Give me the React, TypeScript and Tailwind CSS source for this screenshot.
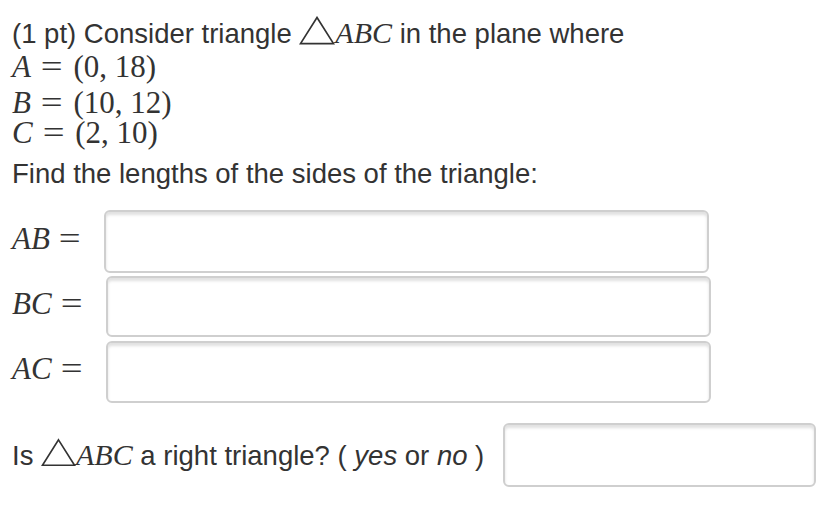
import React from 'react';

const sans = { fontFamily: '"Liberation Sans", Arial, sans-serif' };
const serif = { fontFamily: '"Liberation Serif", "Times New Roman", serif' };

// MathJax-style open triangle symbol
const Tri = ({ w = 36, h = 29 }: { w?: number; h?: number }) => (
  <svg width={w} height={h} viewBox="0 0 36 29" className="inline-block align-[-2px]" aria-label="triangle">
    <path d="M18 1.5 L34.5 27.6 L1.5 27.6 Z" fill="none" stroke="#333" strokeWidth="1.7" strokeLinejoin="miter" />
  </svg>
);

const Box = ({ className }: { className: string }) => (
  <div
    className={`rounded-[6px] border-2 border-[#cfcfcf] bg-white shadow-[inset_0_3px_3px_rgba(0,0,0,0.12)] ${className}`}
  />
);

const Eq = ({ className = '' }: { className?: string }) => (
  <span className={`inline-block scale-x-[1.25] ${className}`}>=</span>
);

const MathLine = ({ v, coords, h }: { v: string; coords: string; h: string }) => (
  <div className={`${h} leading-[34px] text-[31px] text-[#333] whitespace-pre`} style={serif}>
    <span className="italic">{v}</span>
    <Eq className="ml-[12px] mr-[13px]" />({coords})
  </div>
);

const Label = ({ text, w }: { text: string; w: string }) => (
  <span className={`${w} pb-[6px] text-[31px] leading-[34px] whitespace-pre`} style={serif}>
    <span className="italic">{text}</span>
    <Eq className="ml-[11px]" />
  </span>
);

export default function App() {
  return (
    <div className="min-h-[515px] w-[836px] bg-white pl-3 pt-[16px] text-[#333]" style={sans}>
      <div className="h-[34px] whitespace-pre text-[27.5px] leading-[32px]">
        (1 pt) Consider triangle <Tri />
        <span className="italic text-[30px]" style={serif}>ABC</span> in the plane where
      </div>
      <MathLine v="A" coords="0, 18" h="h-[36px]" />
      <MathLine v="B" coords="10, 12" h="h-[30px]" />
      <MathLine v="C" coords="2, 10" h="h-[42px]" />
      <div className="h-[32px] text-[27.5px] leading-[32px]">Find the lengths of the sides of the triangle:</div>

      <div className="mt-[20px] flex flex-col">
        <div className="flex items-center">
          <Label text="AB" w="w-[92px]" />
          <Box className="h-[63px] w-[605px]" />
        </div>
        <div className="mt-[3px] flex items-center">
          <Label text="BC" w="w-[94px]" />
          <Box className="h-[61px] w-[605px]" />
        </div>
        <div className="mt-[4px] flex items-center">
          <Label text="AC" w="w-[94px]" />
          <Box className="h-[62px] w-[605px]" />
        </div>
        <div className="mt-[20px] flex items-center">
          <div className="w-[491px] whitespace-pre text-[27.5px] leading-[32px]">
            Is <Tri w={35} h={29} />
            <span className="italic text-[30px]" style={serif}>ABC</span> a right triangle? ( <i>yes</i> or <i>no</i> )
          </div>
          <Box className="h-[64px] w-[313px]" />
        </div>
      </div>
    </div>
  );
}
